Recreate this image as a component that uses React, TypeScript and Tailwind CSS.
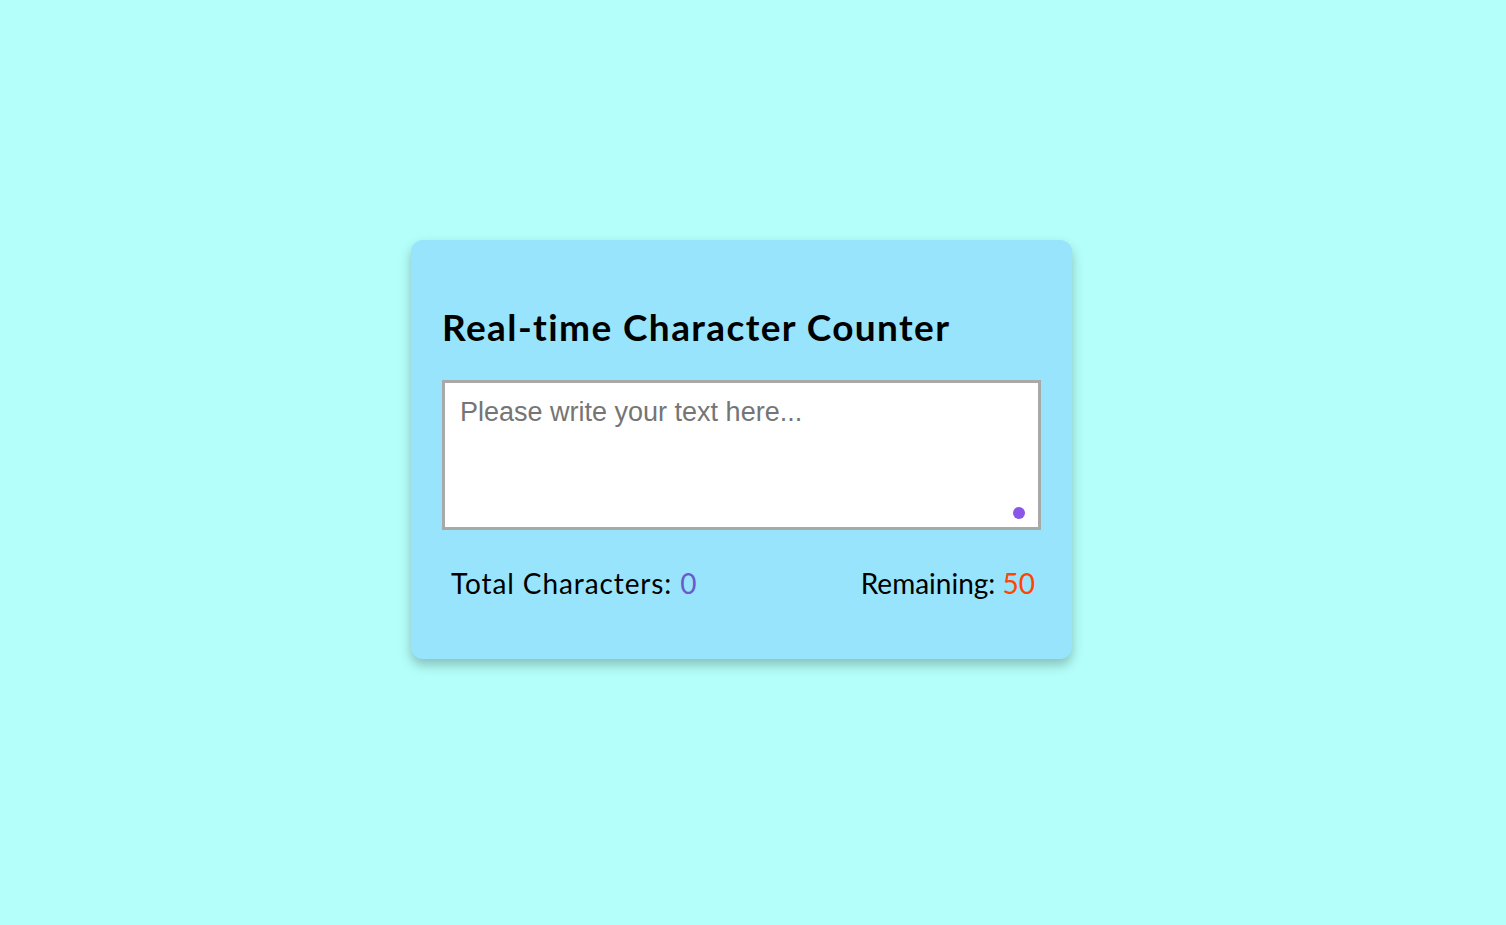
import { useState } from "react"

const MAX = 50

export default function App() {
  const [text, setText] = useState("")

  return (
    <div className="flex h-[925px] w-full items-center justify-center bg-[#b4fffa] pr-[23px] pb-[26px]">
      <div
        className="w-[661px] rounded-xl bg-[#98e4fc] px-[31px] pt-[60px] pb-[58px] shadow-[0_6px_12px_rgba(0,0,0,0.25)]"
        style={{ fontFamily: '"Comic Sans MS", Lato, "Open Sans", sans-serif' }}
      >
        <h2 className="text-[37px] font-bold leading-[54px] tracking-[1.4px] text-black">
          Real-time Character Counter
        </h2>
        <div className="relative mt-[26px]">
          <textarea
            value={text}
            maxLength={MAX}
            onChange={(e) => setText(e.target.value)}
            placeholder="Please write your text here..."
            className="block h-[150px] w-full resize-none border-[3px] border-[#a9a9a9] bg-white px-[15px] pt-[14px] pb-[10px] text-[27px] leading-[31px] text-black outline-none placeholder:text-[#757575]"
            style={{ fontFamily: '"Liberation Sans", Arial, sans-serif' }}
          />
          <span className="absolute right-[16px] bottom-[11px] h-[12px] w-[12px] rounded-full bg-[#8b55e8]" />
        </div>
        <div className="mt-[35px] flex items-center justify-between pl-[9px] pr-[6px] text-[28px] leading-[36px] text-black">
          <p className="tracking-[0.9px]">
            Total Characters: <span className="text-[#6a5acd]">{text.length}</span>
          </p>
          <p>
            Remaining: <span className="text-[#ff4500]">{MAX - text.length}</span>
          </p>
        </div>
      </div>
    </div>
  )
}
